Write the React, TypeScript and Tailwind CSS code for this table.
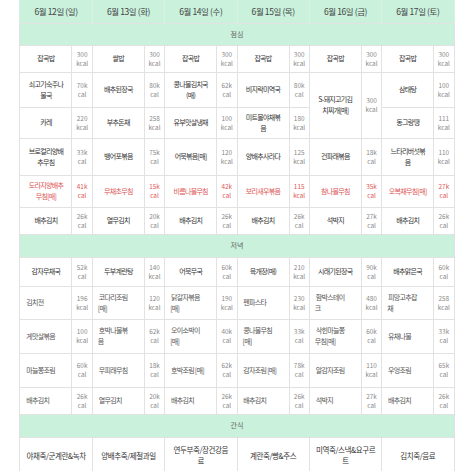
import { Fragment } from 'react'

type Dish = { name: string; kcal: string; red?: boolean; span?: number }
type Cell = Dish | null

const DAYS = ['6월 12일 (일)', '6월 13일 (화)', '6월 14일 (수)', '6월 15일 (목)', '6월 16일 (금)', '6월 17일 (토)']

const d = (name: string, kcal: string, red = false, span = 1): Dish => ({ name, kcal, red, span })

const LUNCH: Cell[][] = [
  [d('잡곡밥', '300|kcal'), d('쌀밥', '300|kcal'), d('잡곡밥', '300|kcal'), d('잡곡밥', '300|kcal'), d('잡곡밥', '300|kcal'), d('잡곡밥', '300|kcal')],
  [d('쇠고기숙주나물국', '70k|cal'), d('배추된장국', '80k|cal'), d('콩나물김치국(매)', '62k|cal'), d('비지락미역국', '80k|cal'), d('S-돼지고기김치찌개[매]', '300|kcal', false, 2), d('삼태탕', '100|kcal')],
  [d('카레', '220|kcal'), d('부추돈채', '258|kcal'), d('유부맛살냉채', '100|kcal'), d('미트볼야채볶음', '180|kcal'), null, d('동그랑땡', '111|kcal')],
  [d('브로컬리양배추무침', '33k|cal'), d('뱅어포볶음', '75k|cal'), d('어묵볶음[매]', '120|kcal'), d('양배추사라다', '125|kcal'), d('건파래볶음', '18k|cal'), d('느타리버섯볶음', '110|kcal')],
  [d('도라지양배추무침[매]', '41k|cal', true), d('무채초무침', '15k|cal', true), d('비름나물무침', '42k|cal', true), d('보리새우볶음', '115|kcal', true), d('참나물무침', '35k|cal', true), d('오복채무침[매]', '27k|cal', true)],
  [d('배추김치', '26k|cal'), d('열무김치', '20k|cal'), d('배추김치', '26k|cal'), d('배추김치', '26k|cal'), d('석박지', '27k|cal'), d('배추김치', '26k|cal')],
]

const DINNER: Dish[][] = [
  [d('감자무채국', '52k|cal'), d('두부계란탕', '140|kcal'), d('어묵무국', '60k|cal'), d('육개장(매)', '210|kcal'), d('시래기된장국', '90k|cal'), d('배추맑은국', '60k|cal')],
  [d('김치전', '196|kcal'), d('코다리조림 [매]', '120|kcal'), d('닭갈자볶음 [매]', '190|kcal'), d('펜파스타', '230|kcal'), d('함박스테이크', '480|kcal'), d('피망고추잡채', '258|kcal')],
  [d('게맛살볶음', '100|kcal'), d('호박나물볶음', '62k|cal'), d('오이소박이 [매]', '40k|cal'), d('콩나물무침 [매]', '33k|cal'), d('삭힌마늘쫑무침[매]', '60k|cal'), d('유채나물', '33k|cal')],
  [d('마늘쫑조림', '60k|cal'), d('무피래무침', '18k|cal'), d('호박조림 [매]', '62k|cal'), d('감자조림 [매]', '78k|cal'), d('알감자조림', '110|kcal'), d('우엉조림', '65k|cal')],
  [d('배추김치', '26k|cal'), d('열무김치', '20k|cal'), d('배추김치', '26k|cal'), d('배추김치', '26k|cal'), d('석박지', '27k|cal'), d('배추김치', '26k|cal')],
]

// '|' marks where the line wraps in the printed menu
const SNACKS = ['야채죽/군계란&녹차', '양배추죽/제철과일', '연두부죽/장건강음|료', '계란죽/빵&주스', '미역죽/스낵&요구르|트', '김치죽/음료']

const LUNCH_H = ['h-[27px]', 'h-[35px]', 'h-[31px]', 'h-[37px]', 'h-[32px]', 'h-[27px]']
const DINNER_H = ['h-[29px]', 'h-[33px]', 'h-[34px]', 'h-[34px]', 'h-[27px]']

function Kcal({ value, red, rowSpan }: { value: string; red?: boolean; rowSpan?: number }) {
  const [a, b] = value.split('|')
  return (
    <td
      rowSpan={rowSpan}
      className={`border border-[#e2e2e2] px-0 text-center align-middle text-[6.4px] leading-[9px] ${
        red ? 'text-[#dd5555]' : 'text-[#888]'
      }`}
    >
      {a}
      <br />
      {b}
    </td>
  )
}

function Section({ label, height }: { label: string; height: string }) {
  return (
    <tr className={height}>
      <td colSpan={12} className="border border-[#e2e2e2] bg-[#c9f1dc] text-center text-[7px] text-[#666]">
        {label}
      </td>
    </tr>
  )
}

export default function App() {
  return (
    <div className="min-h-screen bg-white font-['Noto_Sans_CJK_KR',sans-serif]">
      <table className="mx-auto w-[434px] table-fixed border-collapse">
        <colgroup>
          {DAYS.map((day) => (
            <Fragment key={day}>
              <col className="w-[52px]" />
              <col className="w-[20.33px]" />
            </Fragment>
          ))}
        </colgroup>
        <thead>
          <tr className="h-[23px] bg-[#c9f1dc]">
            {DAYS.map((day) => (
              <th
                key={day}
                colSpan={2}
                className="border-x border-[#dcefe4] text-center text-[8.5px] font-normal tracking-[-0.4px] text-[#444]"
              >
                {day}
              </th>
            ))}
          </tr>
        </thead>
        <tbody>
          <Section label="점심" height="h-[22px]" />
          {LUNCH.map((row, ri) => (
            <tr key={ri} className={LUNCH_H[ri]}>
              {row.map((cell, ci) =>
                cell ? (
                  <Fragment key={ci}>
                    <td
                      rowSpan={cell.span}
                      className={`border border-[#e2e2e2] px-[6px] text-center align-middle text-[7px] leading-[11px] tracking-[-0.7px] ${
                        cell.red ? 'text-[#dd5555]' : 'text-[#333]'
                      }`}
                    >
                      {cell.name}
                    </td>
                    <Kcal value={cell.kcal} red={cell.red} rowSpan={cell.span} />
                  </Fragment>
                ) : null,
              )}
            </tr>
          ))}
          <Section label="저녁" height="h-[23px]" />
          {DINNER.map((row, ri) => (
            <tr key={ri} className={DINNER_H[ri]}>
              {row.map((cell, ci) => (
                <Fragment key={ci}>
                  <td
                    className={`border border-[#e2e2e2] align-middle text-[7px] leading-[11px] tracking-[-0.7px] ${
                      ri === 0 ? 'px-[6px] text-center text-[#333]' : 'pl-[5px] pr-[12px] text-left text-[#555]'
                    }`}
                  >
                    {ri === 0 ? cell.name : '\u00a0' + cell.name}
                  </td>
                  <Kcal value={cell.kcal} />
                </Fragment>
              ))}
            </tr>
          ))}
          <Section label="간식" height="h-[23px]" />
          <tr className="h-[36px]">
            {SNACKS.map((s) => {
              const [first, rest] = s.split('|')
              return (
                <td
                  key={s}
                  colSpan={2}
                  className="whitespace-nowrap border border-[#e2e2e2] px-[4px] text-center align-middle text-[7.5px] leading-[11px] tracking-[-0.4px] text-[#333]"
                >
                  {first}
                  {rest && (
                    <>
                      <br />
                      {rest}
                    </>
                  )}
                </td>
              )
            })}
          </tr>
        </tbody>
      </table>
    </div>
  )
}
